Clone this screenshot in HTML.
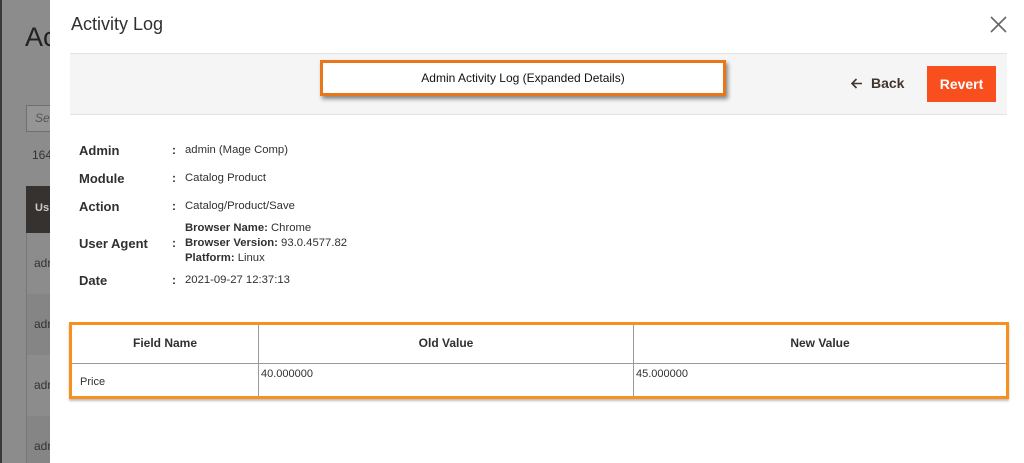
<!DOCTYPE html>
<html><head><style>
*{margin:0;padding:0;box-sizing:border-box}
body{width:1024px;height:463px;overflow:hidden;position:relative;font-family:"Liberation Sans",sans-serif;background:#fff}
.bd{position:absolute;left:0;top:0;width:50px;height:463px;background:#8c8c8c;overflow:hidden}
.bd div{position:absolute}
.m{position:absolute;left:50px;top:0;width:974px;height:463px;background:#fff}
.a{position:absolute;white-space:nowrap}
.lbl{position:absolute;left:79px;font-size:13px;color:#303030;font-weight:bold}
.col{position:absolute;left:172px;font-size:12px;color:#303030;font-weight:bold}
.val{position:absolute;left:185px;font-size:11.3px;color:#303030}
</style></head><body>
<div class="bd">
 <div style="left:0;top:0;width:2px;height:463px;background:#3a3a3a"></div>
 <div style="left:25px;top:22px;font-size:27px;color:#222">Ac</div>
 <div style="left:26px;top:105px;width:30px;height:27px;border:1px solid #6f6f6f;background:#959595"></div>
 <div style="left:35px;top:111px;font-size:12px;font-style:italic;color:#555">Se</div>
 <div style="left:32px;top:148px;font-size:12px;color:#333">164</div>
 <div style="left:26px;top:186px;width:30px;height:47px;background:#353230"></div>
 <div style="left:35px;top:202px;font-size:11px;color:#ccc;font-weight:bold">Us</div>
 <div style="left:26px;top:233px;width:30px;height:61px;background:#8c8c8c"></div>
 <div style="left:26px;top:294px;width:30px;height:61px;background:#858585"></div>
 <div style="left:26px;top:355px;width:30px;height:61px;background:#8c8c8c"></div>
 <div style="left:26px;top:416px;width:30px;height:61px;background:#858585"></div>
 <div style="left:26px;top:233px;width:1px;height:240px;background:#777"></div>
 <div style="left:34px;top:256px;font-size:12px;color:#333">adr</div>
 <div style="left:34px;top:317px;font-size:12px;color:#333">adr</div>
 <div style="left:34px;top:378px;font-size:12px;color:#333">adr</div>
 <div style="left:34px;top:439px;font-size:12px;color:#333">adr</div>
</div>
<div class="m"></div>
<div class="a" style="left:71px;top:14px;font-size:18px;color:#303030">Activity Log</div>
<svg class="a" style="left:990px;top:16px" width="17" height="17"><path d="M1 1L16 16M16 1L1 16" stroke="#666" stroke-width="1.6"/></svg>
<div class="a" style="left:70px;top:53px;width:937px;height:62px;background:#f5f5f5;border-top:1px solid #e3e3e3;border-bottom:1px solid #e3e3e3"></div>
<div class="a" style="left:320px;top:60px;width:406px;height:36px;background:#fff;border:3px solid #e8771a;box-shadow:2px 3px 4px rgba(0,0,0,.45);font-size:12px;color:#111;text-align:center;line-height:30px">Admin Activity Log (Expanded Details)</div>
<svg class="a" style="left:851px;top:78px" width="12" height="11"><path d="M1 5.5H11M5.5 1L1 5.5L5.5 10" stroke="#41362f" stroke-width="1.6" fill="none"/></svg>
<div class="a" style="left:871px;top:75px;font-size:14px;color:#41362f;font-weight:bold">Back</div>
<div class="a" style="left:927px;top:66px;width:69px;height:36px;background:#f94f1e;color:#fff;font-size:14px;font-weight:bold;text-align:center;line-height:36px">Revert</div>
<div class="lbl" style="top:143px">Admin</div><div class="col" style="top:143px">:</div><div class="val" style="top:144px">admin (Mage Comp)</div>
<div class="lbl" style="top:171px">Module</div><div class="col" style="top:171px">:</div><div class="val" style="top:172px">Catalog Product</div>
<div class="lbl" style="top:199px">Action</div><div class="col" style="top:199px">:</div><div class="val" style="top:200px">Catalog/Product/Save</div>
<div class="lbl" style="top:236px">User Agent</div><div class="col" style="top:236px">:</div>
<div class="val" style="top:222px"><b>Browser Name:</b> Chrome</div>
<div class="val" style="top:237px"><b>Browser Version:</b> 93.0.4577.82</div>
<div class="val" style="top:252px"><b>Platform:</b> Linux</div>
<div class="lbl" style="top:273px">Date</div><div class="col" style="top:273px">:</div><div class="val" style="top:274px">2021-09-27 12:37:13</div>
<div class="a" style="left:69px;top:322px;width:940px;height:77px;border:3px solid #f7901e;box-shadow:0 2px 2px rgba(0,0,0,.25)"></div>
<div class="a" style="left:72px;top:363px;width:934px;height:1px;background:#999"></div>
<div class="a" style="left:258px;top:325px;width:1px;height:71px;background:#999"></div>
<div class="a" style="left:633px;top:325px;width:1px;height:71px;background:#999"></div>
<div class="a" style="left:72px;top:336px;width:186px;text-align:center;font-size:12px;font-weight:bold;color:#303030">Field Name</div>
<div class="a" style="left:259px;top:336px;width:374px;text-align:center;font-size:12px;font-weight:bold;color:#303030">Old Value</div>
<div class="a" style="left:634px;top:336px;width:372px;text-align:center;font-size:12px;font-weight:bold;color:#303030">New Value</div>
<div class="a" style="left:80px;top:376px;font-size:11px;color:#303030">Price</div>
<div class="a" style="left:261px;top:368px;font-size:11px;color:#303030">40.000000</div>
<div class="a" style="left:636px;top:368px;font-size:11px;color:#303030">45.000000</div>
</body></html>
